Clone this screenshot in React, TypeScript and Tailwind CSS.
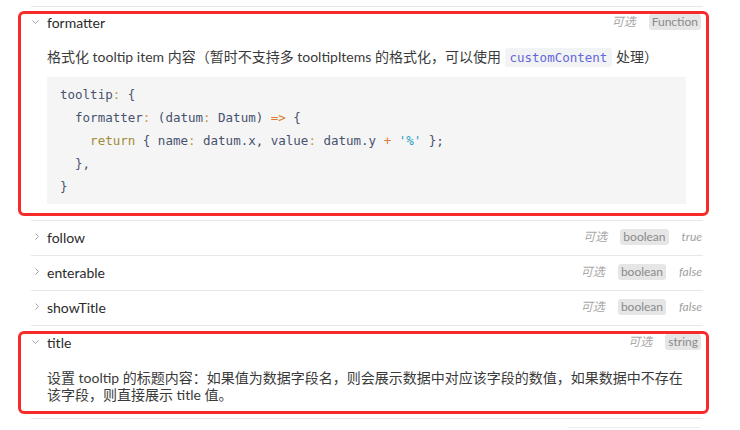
import React from 'react';

const sans = "font-['Lato','Noto_Sans_CJK_SC',sans-serif]";
const mono = "font-['DejaVu_Sans_Mono',monospace]";

function Chevron({ open }: { open?: boolean }) {
  return (
    <svg width="16" height="16" viewBox="0 0 16 16" className="shrink-0">
      {open ? (
        <path d="M1.5 6.5 L4.5 9.5 L7.5 6.5" fill="none" stroke="#a3a3a3" strokeWidth="1" />
      ) : (
        <path d="M4.5 4.5 L7.5 7.5 L4.5 10.5" fill="none" stroke="#a3a3a3" strokeWidth="1" />
      )}
    </svg>
  );
}

function Meta({ type, def }: { type: string; def?: string }) {
  return (
    <div className="ml-auto flex items-center gap-[13px]">
      <span className="text-[12px] italic text-[#a8a8a8]">可选</span>
      <span className="h-[16px] rounded-[3px] bg-[#e6e6e6] px-[3px] text-[12px] leading-[16px] text-[#8a8a8a]">{type}</span>
      {def && <span className="text-[12px] italic text-[#a0a0a0]">{def}</span>}
    </div>
  );
}

function Row({ name, type, def }: { name: string; type: string; def: string }) {
  return (
    <div className="flex h-[35px] items-center border-b border-[#e8e8e8] pb-[2px] pr-[1px]">
      <Chevron />
      <span className="text-[14px] text-[#2b2b2b]">{name}</span>
      <Meta type={type} def={def} />
    </div>
  );
}

const c = {
  p: 'text-[#47526f]',
  op: 'text-[#c4973c]',
  arrow: 'text-[#dd7a2e]',
  kw: 'text-[#a38b35]',
  str: 'text-[#1ba2c7]',
};

export default function App() {
  return (
    <div className={`${sans} min-h-[430px] bg-white pl-[31px] pt-[6px]`}>
      <div className="w-[672px] border-t border-[#e8e8e8]">
        {/* formatter */}
        <div className="border-b border-[#e8e8e8] pb-[4px] pt-[4px]">
          <div className="-ml-[13px] -mr-[6px] rounded-[6px] border-[3px] border-[#f82b2b] pb-[9px] pl-[10px] pr-[5px]">
            <div className="flex h-[18px] items-center pb-[2px]">
              <Chevron open />
              <span className="text-[14px] text-[#2b2b2b]">formatter</span>
              <Meta type="Function" />
            </div>
            <div className="ml-[16px] mt-[14px] text-[14px] leading-[22px] text-[#3a3a3a]">
              格式化 tooltip item 内容（暂时不支持多 tooltipItems 的格式化，可以使用{' '}
              <code className={`${mono} rounded-[3px] bg-[#f2f3f5] px-[5px] py-[2px] text-[12.5px] text-[#6467d8]`}>customContent</code>{' '}
              处理）
            </div>
            <pre className={`${mono} ml-[16px] mt-[8px] w-[639px] bg-[#f5f5f5] px-[13px] py-[6px] text-[12.5px] leading-[23px] ${c.p}`}>
              <div>tooltip<span className={c.op}>:</span> {'{'}</div>
              <div>
                {'  '}formatter<span className={c.op}>:</span> (datum<span className={c.op}>:</span> Datum){' '}
                <span className={c.arrow}>=&gt;</span> {'{'}
              </div>
              <div>
                {'    '}<span className={c.kw}>return</span> {'{'} name<span className={c.op}>:</span> datum.x, value
                <span className={c.op}>:</span> datum.y <span className={c.arrow}>+</span>{' '}
                <span className={c.str}>'%'</span> {'};'}
              </div>
              <div>{'  '}{'},'}</div>
              <div>{'}'}</div>
            </pre>
          </div>
        </div>

        <Row name="follow" type="boolean" def="true" />
        <Row name="enterable" type="boolean" def="false" />
        <Row name="showTitle" type="boolean" def="false" />

        {/* title */}
        <div className="border-b border-[#e8e8e8] pb-[4px] pt-[5px]">
          <div className="-ml-[13px] -mr-[6px] rounded-[6px] border-[3px] border-[#f82b2b] pb-[8px] pl-[10px] pr-[5px]">
            <div className="flex h-[18px] items-center pb-[2px]">
              <Chevron open />
              <span className="text-[14px] text-[#2b2b2b]">title</span>
              <Meta type="string" />
            </div>
            <div className="ml-[16px] mt-[17px] text-[14px] leading-[17px] text-[#3a3a3a]">
              设置 tooltip 的标题内容：如果值为数据字段名，则会展示数据中对应该字段的数值，如果数据中不存在
              <br />
              该字段，则直接展示 title 值。
            </div>
          </div>
        </div>
      </div>
      <div className="ml-[537px] mt-[8px] w-[132px] border-t border-[#ececec]" />
    </div>
  );
}
